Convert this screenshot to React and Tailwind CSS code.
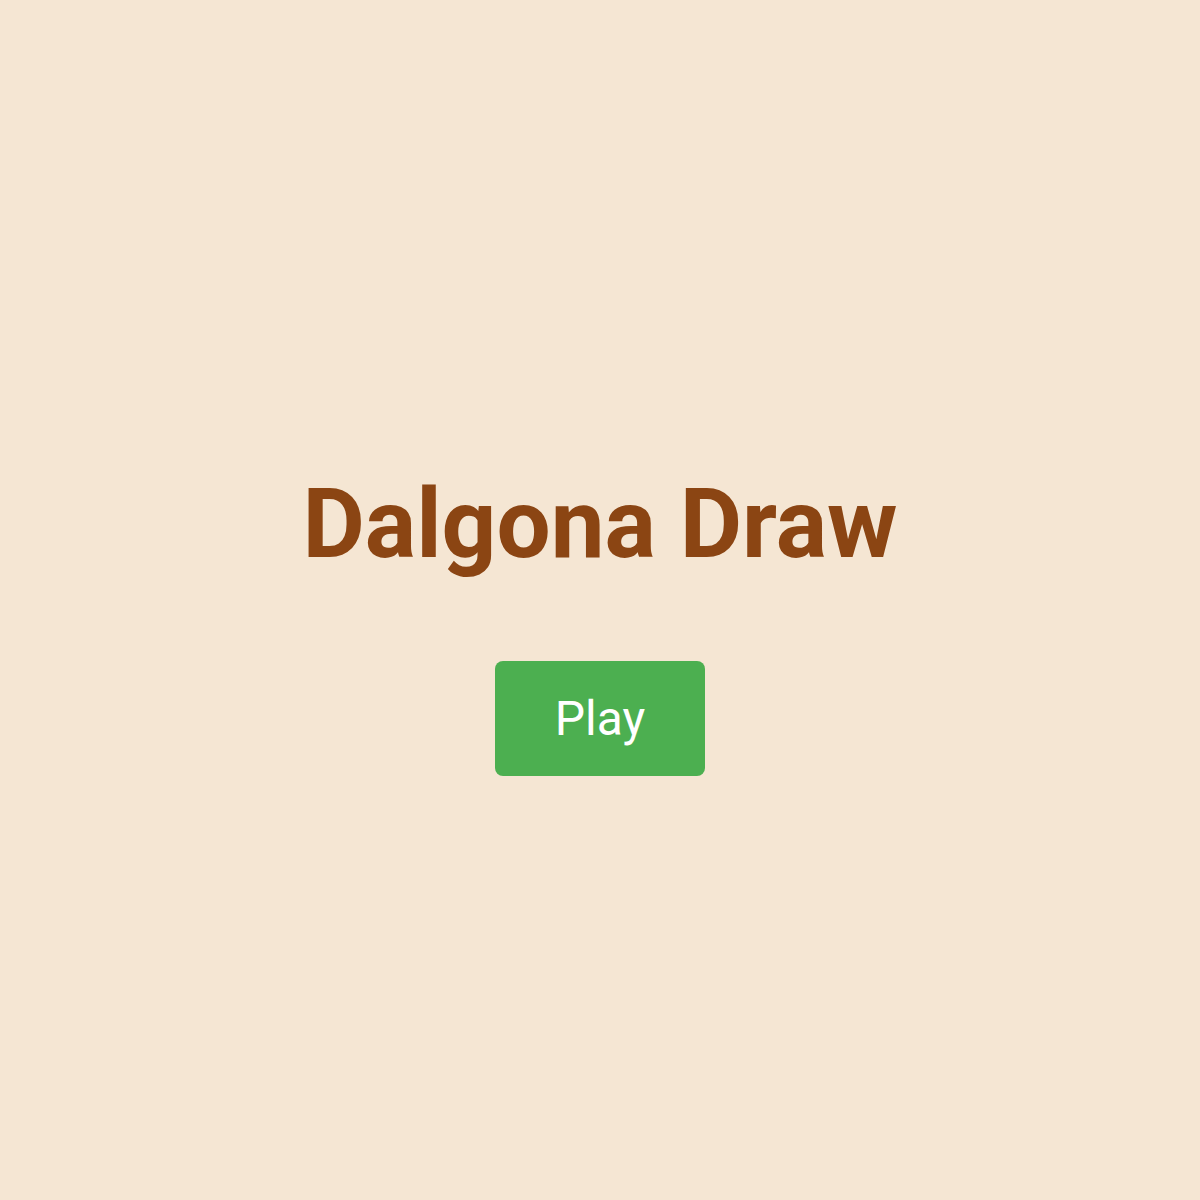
export default function App() {
  return (
    <div className="min-h-screen bg-[#f5e6d3] flex flex-col items-center justify-center font-['Roboto',_'Liberation_Sans',_sans-serif]">
      <h1 className="mt-[43px] text-[96px] leading-[115px] font-bold text-[#8b4513]">
        Dalgona Draw
      </h1>
      <button className="mt-[79px] w-[210px] h-[115px] rounded-lg bg-[#4caf50] text-white text-[48px] leading-none">
        Play
      </button>
    </div>
  );
}
